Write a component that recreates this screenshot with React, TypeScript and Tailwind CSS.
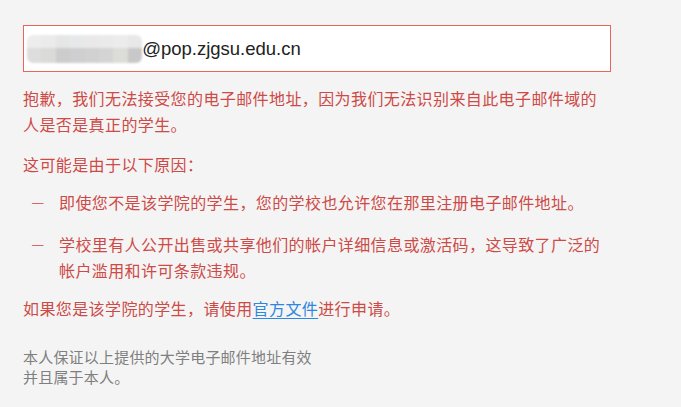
import React from "react";

const cjk = { fontFamily: '"Noto Sans CJK SC", "Noto Sans", sans-serif' };

const top = ["#ededed", "#ebebeb", "#e6e6e6", "#e7e8ea", "#e9e9e9", "#eaeaea", "#ececec", "#e8e8e8"];
const bottom = ["#dddddd", "#dadad8", "#cccccc", "#cfcfd2", "#d1d1d1", "#d4d4d4", "#dcdcd8", "#c8c8c8"];

function Dash() {
  return (
    <span className="w-[36px] pl-[9px] shrink-0">
      <span
        className="text-[11.5px] align-[4px]"
        style={{ fontFamily: '"Liberation Sans", Arial, sans-serif' }}
      >
        —
      </span>
    </span>
  );
}

export default function App() {
  return (
    <div className="w-full h-[407px] bg-[#f4f4f4] overflow-hidden" style={cjk}>
      <div className="w-[588px] ml-[23px] pt-[25px]">
        <div className="h-[47px] border border-[#e8665c] bg-white flex items-center pl-[3px]">
          <div className="flex blur-[1.2px] rounded-[6px] overflow-hidden">
            {top.map((c, i) => (
              <div key={i} className="flex flex-col">
                <div className="w-[14.4px] h-[13px]" style={{ background: c }} />
                <div className="w-[14.4px] h-[15px]" style={{ background: bottom[i] }} />
              </div>
            ))}
          </div>
          <span
            className="text-[18.5px] text-[#222222]"
            style={{ fontFamily: '"Liberation Sans", Arial, sans-serif' }}
          >
            @pop.zjgsu.edu.cn
          </span>
        </div>

        <div className="text-[16px] leading-[26px] tracking-[0.4px] text-[#cd4a47]">
          <p className="mt-[13px]">
            抱歉，我们无法接受您的电子邮件地址，因为我们无法识别来自此电子邮件域的人是否是真正的学生。
          </p>
          <p className="mt-[14px]">这可能是由于以下原因：</p>
          <div className="mt-[12px] flex">
            <Dash />
            <span>即使您不是该学院的学生，您的学校也允许您在那里注册电子邮件地址。</span>
          </div>
          <div className="mt-[15px] flex">
            <Dash />
            <span>
              学校里有人公开出售或共享他们的帐户详细信息或激活码，这导致了广泛的帐户滥用和许可条款违规。
            </span>
          </div>
          <p className="mt-[12px]">
            如果您是该学院的学生，请使用
            <a className="text-[#2f86e0] underline underline-offset-[3px]" href="#">
              官方文件
            </a>
            进行申请。
          </p>
        </div>

        <p className="mt-[26px] text-[15px] leading-[20px] tracking-[0.2px] text-[#7f7f7f]">
          本人保证以上提供的大学电子邮件地址有效
          <br />
          并且属于本人。
        </p>
      </div>
    </div>
  );
}
